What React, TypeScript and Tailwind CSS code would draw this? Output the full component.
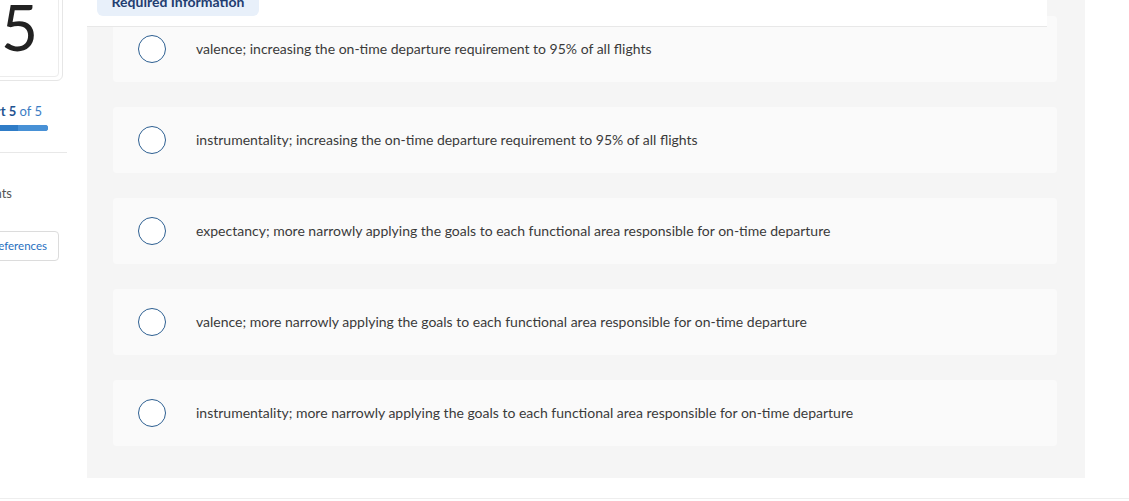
import React from "react";

const options = [
  "valence; increasing the on-time departure requirement to 95% of all flights",
  "instrumentality; increasing the on-time departure requirement to 95% of all flights",
  "expectancy; more narrowly applying the goals to each functional area responsible for on-time departure",
  "valence; more narrowly applying the goals to each functional area responsible for on-time departure",
  "instrumentality; more narrowly applying the goals to each functional area responsible for on-time departure",
];

export default function App() {
  return (
    <div
      className="w-[1129px] h-[501px] overflow-hidden bg-white"
      style={{ fontFamily: "Lato, 'Open Sans', Arial, sans-serif" }}
    >
      <div className="flex">
        {/* Sidebar (clipped on the left) */}
        <div className="w-[87px] shrink-0 overflow-hidden">
          <div className="-ml-[60px] w-[127px]">
            <div className="-mt-[20px] h-[101px] w-[123px] rounded-br-md border border-[#e6e6e6] p-[3px]">
              <div className="flex h-full w-full items-end justify-end rounded-br border border-[#ececec] pr-[20px] pb-[17px]">
                <span className="text-[64px] leading-[64px] text-[#222]">5</span>
              </div>
            </div>
            <div className="mt-[22px] pr-[25px] text-right text-[13px] leading-[16px] text-[#3b7dc4]">
              <span className="font-bold text-[#1f5391]">Part 5</span> of 5
            </div>
            <div className="mt-[6px] h-[6px] w-[108px] rounded-r-full bg-[#2f7cc7]">
              <div className="ml-auto h-full w-[30px] rounded-r-full bg-[#4891d6]" />
            </div>
            <div className="mt-[21px] h-px w-full bg-[#e8e8e8]" />
            <div className="mt-[32px] w-[72px] text-right text-[13px] leading-[16px] text-[#555]">
              1 points
            </div>
            <div className="mt-[30px] flex h-[30px] w-[119px] items-center justify-end rounded-r border border-[#dcdcdc] pr-[11px] text-[11.5px] text-[#1f6fbf]">
              References
            </div>
          </div>
        </div>

        {/* Main panel */}
        <div className="relative w-[998px] shrink-0">
          <div className="h-[478px] bg-[#f5f5f5] pt-[16px] pl-[26px] pr-[28px]">
            <div className="flex flex-col gap-[25px]">
              {options.map((t) => (
                <div
                  key={t}
                  className="flex h-[66px] items-center rounded-[4px] bg-[#fafafa] pl-[25px]"
                >
                  <div className="h-[28px] w-[28px] shrink-0 rounded-full border-[1.5px] border-[#2d5f91] bg-white" />
                  <div className="mb-[2px] ml-[30px] text-[14px] text-[#3a3a3a]">{t}</div>
                </div>
              ))}
            </div>
          </div>

          {/* Sticky header overlay */}
          <div className="absolute left-0 top-0 h-[27px] w-[960px] border-b border-[#e8e8e8] bg-white">
            <div className="absolute left-[10px] top-[-6px] h-[22px] w-[162px] rounded-b-[6px] bg-[#e8f0fa] text-center text-[14px] font-bold leading-[16px] text-[#1f3d70]">
              Required Information
            </div>
          </div>
        </div>
      </div>
      <div className="mt-[20px] h-px w-full bg-[#eeeeee]" />
    </div>
  );
}
